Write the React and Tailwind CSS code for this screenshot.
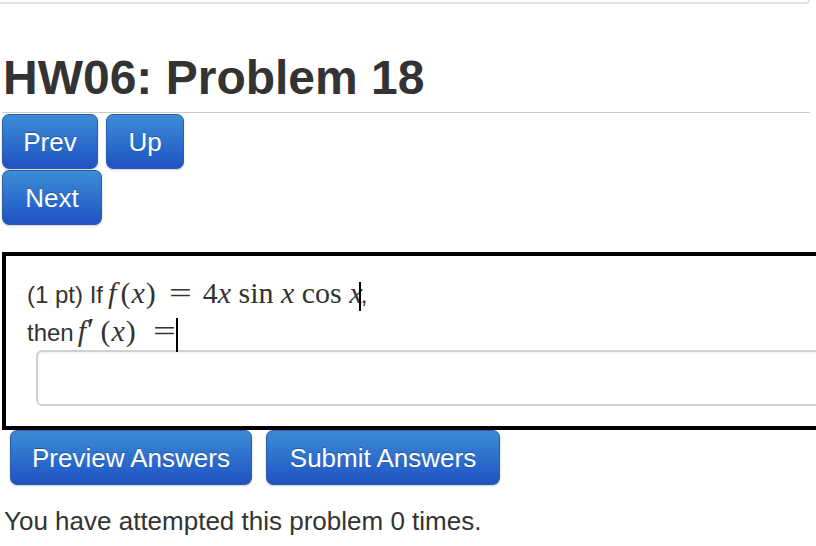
import React from "react";

const sans = { fontFamily: '"Liberation Sans", Arial, Helvetica, sans-serif' };
const serif = { fontFamily: '"Liberation Serif", "Times New Roman", serif' };

const btn =
  "h-[55px] rounded-[7px] border border-[#2a5bab] bg-gradient-to-b from-[#3d8cd6] to-[#2152c2] text-white text-[26px] leading-none shadow-[0_1px_2px_rgba(0,0,0,0.2)] [text-shadow:0_-1px_0_rgba(0,0,0,0.25)]";

const Cursor = ({ h }) => (
  <span className={`inline-block w-[2px] bg-black align-middle ${h}`} />
);

const Eq = ({ className }) => (
  <span className={`inline-block scale-x-[1.35] ${className}`}>=</span>
);

const App = () => {
  return (
    <div
      className="w-[816px] h-[546px] overflow-hidden bg-white text-[#333]"
      style={sans}
    >
      <div className="w-[810px] h-[4px] border-b-2 border-r-2 border-[#e2e2e2] rounded-br-[6px]" />
      <h1 className="mt-[46px] pl-[3px] text-[48px] font-bold leading-[56px] text-[#333]">
        HW06: Problem 18
      </h1>
      <div className="ml-[2px] mt-[6px] w-[808px] border-t border-[#cccccc]" />
      <div className="flex flex-wrap w-[190px] pl-[2px] mt-[1px] gap-x-[8px]">
        <button className={`${btn} w-[96px]`}>Prev</button>
        <button className={`${btn} w-[78px]`}>Up</button>
        <button className={`${btn} w-[100px] mt-[1px]`}>Next</button>
      </div>
      <div className="mt-[27px] ml-[2px] w-[830px] h-[178px] border-4 border-black pl-[21px] pt-[20px]">
        <div className="text-[24px] leading-[37px]">
          <div className="h-[37px] whitespace-nowrap">
            (1 pt) If
            <span className="ml-[5px] text-[30px] leading-none" style={serif}>
              <i className="pr-[4px]">f</i>(<i className="px-[1px]">x</i>)
              <Eq className="ml-[16px] mr-[14px]" />
              4<i>x</i> sin <i>x</i> cos <i>x</i>
            </span>
            <Cursor h="h-[29px] -ml-[4px]" />,
          </div>
          <div className="h-[37px] whitespace-nowrap">
            then
            <span className="ml-[4px] text-[30px] leading-none" style={serif}>
              <i className="pr-[1px]">f</i>
              <span className="text-[34px]">′</span>
              <span className="ml-[6px]">(</span>
              <i className="px-[1px]">x</i>)
              <Eq className="ml-[20px]" />
            </span>
            <Cursor h="h-[34px] ml-[3px]" />
          </div>
        </div>
        <div className="ml-[9px] h-[56px] w-[800px] rounded-[6px] border-2 border-[#d0d0d0] shadow-[inset_0_1px_2px_rgba(0,0,0,0.08)]" />
      </div>
      <div className="flex gap-[14px] pl-[10px]">
        <button className={`${btn} w-[242px]`}>Preview Answers</button>
        <button className={`${btn} w-[234px]`}>Submit Answers</button>
      </div>
      <p className="mt-[18px] pl-[4px] text-[26px] leading-[37px]">
        You have attempted this problem 0 times.
      </p>
    </div>
  );
};

export default App;
